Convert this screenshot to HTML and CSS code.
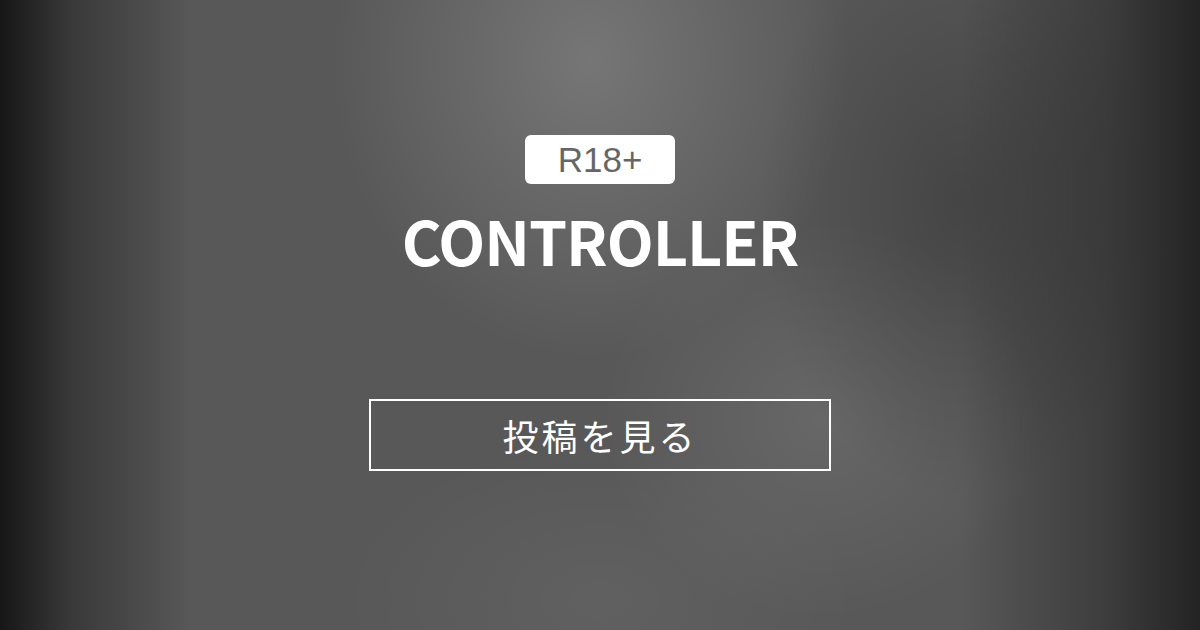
FILE: index.html
```html
<!DOCTYPE html>
<html lang="ja">
<head>
  <meta charset="UTF-8" />
  <meta name="viewport" content="width=device-width, initial-scale=1.0"/>
  <title>CONTROLLER</title>
  <link rel="stylesheet" href="styles.css">
</head>
<body>
  <main class="card">
    <span class="rating">R18+</span>
    <h1 class="title">CONTROLLER</h1>
    <a href="#" class="view-btn">投稿を見る</a>
  </main>
</body>
</html>
```

FILE: styles.css
```css
body, html {
  margin: 0;
  padding: 0;
  width: 1200px;
  height: 630px;
  overflow: hidden;
}
body {
  font-family: 'Liberation Sans', 'Noto Sans CJK JP', sans-serif;
  color: #fff;
  background-color: #585858;
  background-image:
    linear-gradient(90deg, rgba(0,0,0,0.75) 0%, rgba(0,0,0,0.35) 6%, rgba(0,0,0,0) 16%, rgba(0,0,0,0) 80%, rgba(0,0,0,0.3) 92%, rgba(0,0,0,0.6) 100%),
    radial-gradient(ellipse 260px 300px at 590px 60px, rgba(255,255,255,0.18), rgba(255,255,255,0)),
    radial-gradient(ellipse 200px 300px at 960px 200px, rgba(0,0,0,0.22), rgba(0,0,0,0)),
    radial-gradient(ellipse 220px 200px at 820px 420px, rgba(255,255,255,0.09), rgba(255,255,255,0)),
    radial-gradient(ellipse 260px 160px at 600px 600px, rgba(255,255,255,0.05), rgba(255,255,255,0));
}
.card {
  display: flex;
  flex-direction: column;
  align-items: center;
  padding-top: 135px;
}
.rating {
  display: block;
  width: 150px;
  height: 49px;
  line-height: 49px;
  text-align: center;
  background: #fff;
  border-radius: 6px;
  color: #666;
  font-size: 35px;
}
.title {
  margin: 21px 0 0;
  font-family: 'Noto Sans CJK JP', sans-serif;
  font-size: 61px;
  font-weight: 700;
  line-height: 70px;
  letter-spacing: -1px;
}
.view-btn {
  display: flex;
  align-items: center;
  justify-content: center;
  box-sizing: border-box;
  width: 462px;
  height: 72px;
  margin-top: 124px;
  border: 2px solid #fff;
  color: #fff;
  text-decoration: none;
  font-family: 'Noto Sans CJK JP', sans-serif;
  font-size: 36px;
  letter-spacing: 3px;
}
```
